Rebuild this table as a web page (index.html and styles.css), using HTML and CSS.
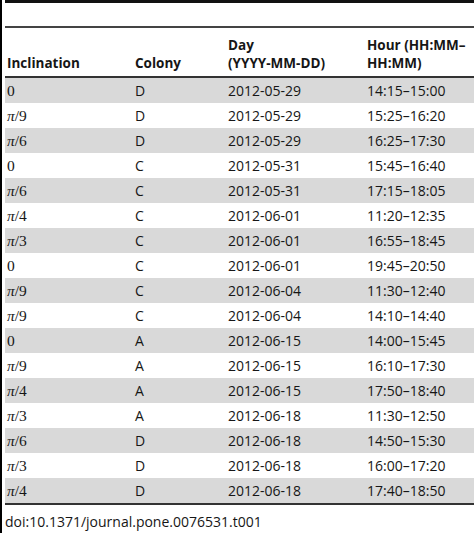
FILE: index.html
```html
<!DOCTYPE html>
<html>
<head>
<meta charset="utf-8">
<link rel="stylesheet" href="styles.css">
</head>
<body>
<div class="page">
  <div class="topbar"></div>
  <div class="capline"></div>
  <table class="tbl">
    <colgroup>
      <col class="c1"><col class="c2"><col class="c3"><col class="c4">
    </colgroup>
    <thead>
      <tr>
        <th>Inclination</th>
        <th>Colony</th>
        <th>Day<br>(YYYY-MM-DD)</th>
        <th>Hour (HH:MM–<br>HH:MM)</th>
      </tr>
    </thead>
    <tbody>
      <tr class="alt"><td class="m">0</td><td>D</td><td>2012-05-29</td><td>14:15–15:00</td></tr>
      <tr><td class="m"><i>π</i>/9</td><td>D</td><td>2012-05-29</td><td>15:25–16:20</td></tr>
      <tr class="alt"><td class="m"><i>π</i>/6</td><td>D</td><td>2012-05-29</td><td>16:25–17:30</td></tr>
      <tr><td class="m">0</td><td>C</td><td>2012-05-31</td><td>15:45–16:40</td></tr>
      <tr class="alt"><td class="m"><i>π</i>/6</td><td>C</td><td>2012-05-31</td><td>17:15–18:05</td></tr>
      <tr><td class="m"><i>π</i>/4</td><td>C</td><td>2012-06-01</td><td>11:20–12:35</td></tr>
      <tr class="alt"><td class="m"><i>π</i>/3</td><td>C</td><td>2012-06-01</td><td>16:55–18:45</td></tr>
      <tr><td class="m">0</td><td>C</td><td>2012-06-01</td><td>19:45–20:50</td></tr>
      <tr class="alt"><td class="m"><i>π</i>/9</td><td>C</td><td>2012-06-04</td><td>11:30–12:40</td></tr>
      <tr><td class="m"><i>π</i>/9</td><td>C</td><td>2012-06-04</td><td>14:10–14:40</td></tr>
      <tr class="alt"><td class="m">0</td><td>A</td><td>2012-06-15</td><td>14:00–15:45</td></tr>
      <tr><td class="m"><i>π</i>/9</td><td>A</td><td>2012-06-15</td><td>16:10–17:30</td></tr>
      <tr class="alt"><td class="m"><i>π</i>/4</td><td>A</td><td>2012-06-15</td><td>17:50–18:40</td></tr>
      <tr><td class="m"><i>π</i>/3</td><td>A</td><td>2012-06-18</td><td>11:30–12:50</td></tr>
      <tr class="alt"><td class="m"><i>π</i>/6</td><td>D</td><td>2012-06-18</td><td>14:50–15:30</td></tr>
      <tr><td class="m"><i>π</i>/3</td><td>D</td><td>2012-06-18</td><td>16:00–17:20</td></tr>
      <tr class="alt"><td class="m"><i>π</i>/4</td><td>D</td><td>2012-06-18</td><td>17:40–18:50</td></tr>
    </tbody>
  </table>
  <div class="doi">doi:10.1371/journal.pone.0076531.t001</div>
</div>
</body>
</html>
```

FILE: styles.css
```css
html, body {
  margin: 0;
  padding: 0;
  background: #fff;
}

.page {
  width: 474px;
  height: 533px;
  box-sizing: border-box;
  border-left: 2px solid #000;
  padding-left: 3px;
  font-family: "Open Sans", "Noto Sans", sans-serif;
  color: #161616;
  overflow: hidden;
}

.topbar {
  height: 3px;
  background: #111;
}

.capline {
  margin-top: 23px;
  height: 2px;
  background: #444;
}

.tbl {
  width: 469px;
  border-collapse: separate;
  border-spacing: 0;
  table-layout: fixed;
}

.c1 { width: 128px; }
.c2 { width: 93px; }
.c3 { width: 139px; }
.c4 { width: 109px; }

.tbl th {
  font-weight: 700;
  font-size: 13.5px;
  line-height: 18px;
  text-align: left;
  vertical-align: bottom;
  padding: 8px 0 4px 2px;
  border-bottom: 2px solid #333;
  white-space: nowrap;
}

.tbl td {
  font-size: 14px;
  line-height: 25px;
  padding: 0 0 0 2px;
  vertical-align: middle;
  white-space: nowrap;
}

.tbl tr.alt td {
  background: #d9d9d9;
}

.tbl td.m {
  font-family: "Liberation Serif", "DejaVu Serif", serif;
  font-size: 15.5px;
}

.tbl tbody tr:last-child td {
  border-bottom: 2px solid #333;
}

.doi {
  margin-top: 8px;
  font-size: 14px;
  line-height: 18px;
}
```
